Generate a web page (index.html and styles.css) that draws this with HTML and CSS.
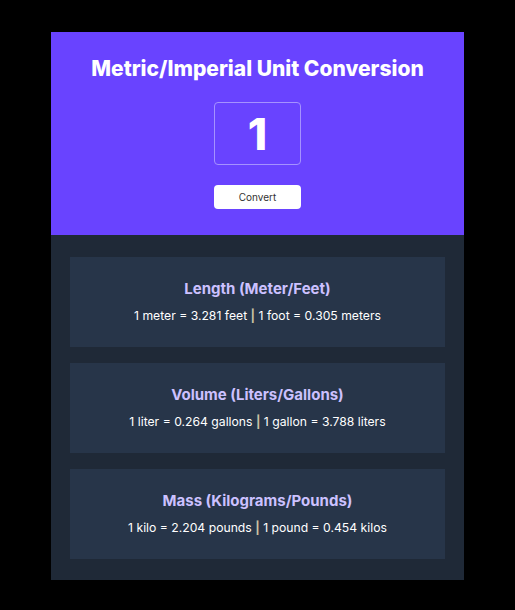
FILE: index.html
```html
<!DOCTYPE html>
<html lang="en">
<head>
    <meta charset="UTF-8">
    <meta name="viewport" content="width=device-width, initial-scale=1.0">
    <title>Unit Conversion</title>
    <link rel="stylesheet" href="styles.css">
</head>
<body>
    <main class="app">
        <section class="header">
            <h1>Metric/Imperial Unit Conversion</h1>
            <input type="text" id="amount" class="amount" value="1">
            <button type="button" id="convertBtn">Convert</button>
        </section>
        <section class="results">
            <div class="card">
                <h2>Length (Meter/Feet)</h2>
                <p id="length">1 meter = 3.281 feet <span class="sep">|</span> 1 foot = 0.305 meters</p>
            </div>
            <div class="card">
                <h2>Volume (Liters/Gallons)</h2>
                <p id="volume">1 liter = 0.264 gallons <span class="sep">|</span> 1 gallon = 3.788 liters</p>
            </div>
            <div class="card">
                <h2>Mass (Kilograms/Pounds)</h2>
                <p id="mass">1 kilo = 2.204 pounds <span class="sep">|</span> 1 pound = 0.454 kilos</p>
            </div>
        </section>
    </main>
</body>
</html>
```
FILE: styles.css
```css
body {
    font-family: 'Inter', 'Liberation Sans', sans-serif;
    background: #000000;
    display: flex;
    justify-content: center;
    align-items: center;
    height: 610px;
    margin: 0;
}
.app {
    width: 413px;
    margin-top: 2px;
    display: flex;
    flex-direction: column;
}
.header {
    background: #6943ff;
    padding: 24px 0 26px;
    display: flex;
    flex-direction: column;
    align-items: center;
}
h1 {
    margin: 0;
    font-size: 21px;
    line-height: 25px;
    font-weight: 800;
    color: #ffffff;
}
.amount {
    box-sizing: border-box;
    width: 87px;
    height: 63px;
    margin-top: 21px;
    background: transparent;
    border: 1px solid #a592ff;
    border-radius: 4px;
    color: #ffffff;
    font-family: inherit;
    font-size: 44px;
    font-weight: 800;
    text-align: center;
    padding: 0;
    outline: none;
}
button {
    width: 87px;
    height: 24px;
    margin-top: 20px;
    background: #ffffff;
    color: #333333;
    border: none;
    border-radius: 4px;
    font-family: inherit;
    font-size: 10px;
    cursor: pointer;
}
.results {
    background: #1f2937;
    padding: 22px 19px 21px;
    display: flex;
    flex-direction: column;
    gap: 16px;
}
.card {
    background: #273549;
    padding: 23px 10px;
    text-align: center;
}
h2 {
    margin: 0 0 10px;
    font-size: 15px;
    line-height: 18px;
    font-weight: 700;
    color: #ccc1ff;
}
.card p {
    margin: 0;
    font-size: 12.2px;
    line-height: 16px;
    color: #ffffff;
}
.sep {
    color: #c9c3a3;
    font-weight: 700;
}
```
